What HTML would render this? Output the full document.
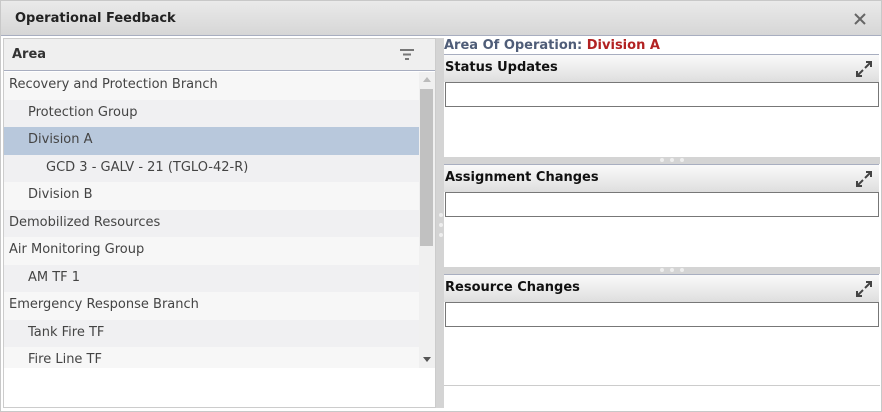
<!DOCTYPE html>
<html><head><meta charset="utf-8"><style>
*{box-sizing:border-box;margin:0;padding:0}
body{width:882px;height:412px;overflow:hidden;background:#fff;font-family:"DejaVu Sans","Liberation Sans",sans-serif;position:relative}
.win{position:absolute;left:0;top:0;width:882px;height:412px;border:1px solid #c8c8c8;background:#fff}
.title{position:absolute;left:0;top:0;width:880px;height:35px;background:linear-gradient(#eaeaea,#d6d6d6);border-bottom:1px solid #a8aec0}
.title span{position:absolute;left:14px;top:10px;font-size:13px;font-weight:bold;color:#222}
.close{position:absolute;right:14px;top:11px;width:14px;height:14px}
.left{position:absolute;left:3px;top:38px;width:433px;height:370px;border:1px solid #ccc;background:#fff}
.hdr{position:absolute;left:0;top:0;width:431px;height:32px;background:#efefef;border-bottom:1px solid #a8aec0}
.hdr span{position:absolute;left:8px;top:8px;font-size:13px;font-weight:bold;color:#333}
.row{position:absolute;left:0;width:415px;height:27.5px;font-size:13px;color:#444;line-height:25px;white-space:nowrap}
.sb{position:absolute;left:415px;top:33px;width:16px;height:296px;background:#f0f0f0}
.thumb{position:absolute;left:1px;top:17px;width:13px;height:157px;background:#c1c1c1}
.split{position:absolute;left:436px;top:38px;width:8px;height:370px;background:#d4d4d4}
.right{position:absolute;left:444px;top:38px;width:436px;height:370px;background:#fff}
.aoo{position:absolute;left:0;top:0px;font-size:13px;font-weight:bold;color:#4f5d78}
.aoo b{color:#b22222}
.sh{position:absolute;left:0;width:435px;height:28px;background:linear-gradient(#fafafa,#dedede);border-top:1px solid #a8aec0}
.sh span{position:absolute;left:1px;top:5px;font-size:13px;font-weight:bold;color:#111}
.sh svg{position:absolute;right:6px;top:5px}
.ta{position:absolute;left:1px;width:434px;height:25px;border:1px solid #777;background:#fff}
.hs{position:absolute;left:0;width:436px;height:7px;background:#d4d4d4}
.dots{position:absolute;left:216px;top:1px;font-size:0}
.dots i{display:inline-block;width:4px;height:4px;border-radius:2px;background:#eee;margin-right:6px}
</style></head><body>
<div class="win">
<div class="title"><span>Operational Feedback</span>
<svg class="close" viewBox="0 0 14 14"><path d="M2 2L12 12M12 2L2 12" stroke="#666" stroke-width="2"/></svg></div>
</div>
<div class="left">
<div class="hdr"><span>Area</span>
<svg style="position:absolute;left:396px;top:10px" width="14" height="12"><path d="M0 1h14M3 5.5h8M5 10h4" stroke="#777" stroke-width="2"/></svg></div>
<div class="row" style="top:33px;background:#f7f7f7;padding-left:5px">Recovery and Protection Branch</div>
<div class="row" style="top:60.5px;background:#f0f0f2;padding-left:24px">Protection Group</div>
<div class="row" style="top:88px;background:#b8c8dc;padding-left:24px">Division A</div>
<div class="row" style="top:115.5px;background:#f0f0f2;padding-left:42px">GCD 3 - GALV - 21 (TGLO-42-R)</div>
<div class="row" style="top:143px;background:#f7f7f7;padding-left:24px">Division B</div>
<div class="row" style="top:170.5px;background:#f0f0f2;padding-left:5px">Demobilized Resources</div>
<div class="row" style="top:198px;background:#f7f7f7;padding-left:5px">Air Monitoring Group</div>
<div class="row" style="top:225.5px;background:#f0f0f2;padding-left:24px">AM TF 1</div>
<div class="row" style="top:253px;background:#f7f7f7;padding-left:5px">Emergency Response Branch</div>
<div class="row" style="top:280.5px;background:#f0f0f2;padding-left:24px">Tank Fire TF</div>
<div class="row" style="top:308px;background:#f7f7f7;padding-left:24px;height:21px;overflow:hidden">Fire Line TF</div>
<div class="sb"><svg style="position:absolute;left:4px;top:5px" width="8" height="5"><path d="M0 5L4 0L8 5Z" fill="#bbb"/></svg>
<div class="thumb"></div>
<svg style="position:absolute;left:4px;top:285px" width="8" height="5"><path d="M0 0L4 5L8 0Z" fill="#555"/></svg></div>
</div>
<div class="split"><div style="position:absolute;left:3px;top:175px;width:4px;height:4px;border-radius:2px;background:#eee"></div><div style="position:absolute;left:3px;top:185px;width:4px;height:4px;border-radius:2px;background:#eee"></div><div style="position:absolute;left:3px;top:195px;width:4px;height:4px;border-radius:2px;background:#eee"></div></div>
<div class="right">
<div class="aoo">Area Of Operation: <b>Division A</b></div>
<div class="sh" style="top:16px"><span>Status Updates</span><svg width="18" height="18" viewBox="0 0 18 18"><path d="M10 8L16 2M11 2h5v5M8 10L2 16M2 11v5h5" stroke="#444" stroke-width="2" fill="none"/></svg></div>
<div class="ta" style="top:44px"></div>
<div class="hs" style="top:119px"><div class="dots"><i></i><i></i><i></i></div></div>
<div class="sh" style="top:126px"><span>Assignment Changes</span><svg width="18" height="18" viewBox="0 0 18 18"><path d="M10 8L16 2M11 2h5v5M8 10L2 16M2 11v5h5" stroke="#444" stroke-width="2" fill="none"/></svg></div>
<div class="ta" style="top:154px"></div>
<div class="hs" style="top:229px"><div class="dots"><i></i><i></i><i></i></div></div>
<div class="sh" style="top:236px"><span>Resource Changes</span><svg width="18" height="18" viewBox="0 0 18 18"><path d="M10 8L16 2M11 2h5v5M8 10L2 16M2 11v5h5" stroke="#444" stroke-width="2" fill="none"/></svg></div>
<div class="ta" style="top:264px"></div>
<div style="position:absolute;left:0;top:347px;width:436px;height:1px;background:#ccc"></div>
</div>
</body></html>
